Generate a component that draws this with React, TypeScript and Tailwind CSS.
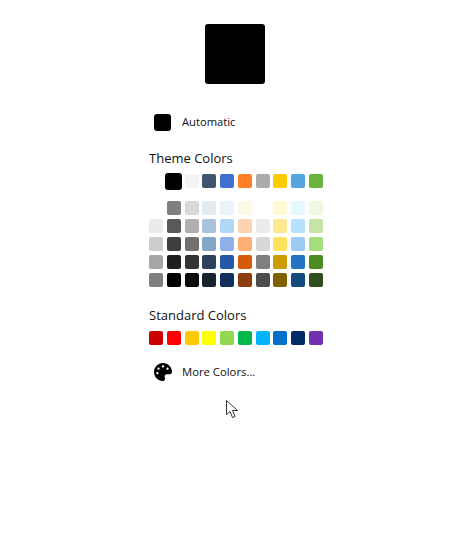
import { FaPalette } from "react-icons/fa";

const themeRow = ["#ffffff", "#000000", "#f4f4f4", "#3f5570", "#3f6fd0", "#ff7f27", "#ababab", "#ffcc00", "#55a5e0", "#6ab33c"];

const shades = [
  ["#ffffff", "#7f7f7f", "#d9d9d9", "#e3eaf2", "#e9f4fa", "#fbfbe3", "#ffffff", "#fff9d4", "#e6f8ff", "#f0fae2"],
  ["#ebebeb", "#595959", "#b0b0b0", "#a9c3dc", "#b0d8f4", "#fcd5b0", "#ebebeb", "#ffe88f", "#b8e0ff", "#c5e4a8"],
  ["#cccccc", "#3f3f3f", "#757070", "#86a6c8", "#8fb0ea", "#ffae75", "#d8d8d8", "#ffe35c", "#9accf4", "#a4dc80"],
  ["#a6a6a6", "#1f1f1f", "#333333", "#2b415e", "#2558a8", "#d65a0a", "#7f7f7f", "#cc9c00", "#2474c4", "#4c8a24"],
  ["#7f7f7f", "#000000", "#0d0d0d", "#16242f", "#12305e", "#8a3c0c", "#4d4d4d", "#7f6000", "#154a80", "#2c4f1c"],
];

const standard = ["#cc0000", "#ff0000", "#ffc800", "#ffff00", "#92d850", "#00b84c", "#00b4ff", "#0070cc", "#002b66", "#7030b0"];

function Swatch({ color, selected }: { color: string; selected?: boolean }) {
  return (
    <div className="flex h-[14px] w-[14px] items-center justify-center">
      <div
        className={selected ? "h-[17px] w-[17px] shrink-0 rounded-[3px]" : "h-[14px] w-[14px] shrink-0 rounded-[2px]"}
        style={{ backgroundColor: color }}
      />
    </div>
  );
}

function SwatchRow({ colors, selectedIndex }: { colors: string[]; selectedIndex?: number }) {
  return (
    <div className="flex w-[174px] justify-between">
      {colors.map((c, i) => (
        <Swatch key={i} color={c} selected={i === selectedIndex} />
      ))}
    </div>
  );
}

export default function App() {
  return (
    <div className="relative h-[541px] w-full bg-white font-['Open_Sans','Noto_Sans',sans-serif] text-[#111111]">
      <div className="mx-auto flex w-[176px] flex-col pt-6">
        <div className="ml-[56px] h-[60px] w-[60px] rounded-[3px] bg-black" />

        <div className="mt-[29px] flex h-[18px] items-center pl-[5px]">
          <div className="h-[17px] w-[17px] rounded-[3px] bg-black" />
          <span className="ml-[11px] text-[11.2px]">Automatic</span>
        </div>

        <div className="mt-[17px] h-[20px] text-[13px] leading-[20px]">Theme Colors</div>
        <div className="mt-[6px]">
          <SwatchRow colors={themeRow} selectedIndex={1} />
        </div>

        <div className="mt-[13px] flex flex-col gap-1">
          {shades.map((row, i) => (
            <SwatchRow key={i} colors={row} />
          ))}
        </div>

        <div className="mt-[18px] h-[20px] text-[13px] leading-[20px]">Standard Colors</div>
        <div className="mt-[6px]">
          <SwatchRow colors={standard} />
        </div>

        <div className="mt-[18px] flex h-[18px] items-center pl-[5px]">
          <FaPalette className="h-[18px] w-[18px] text-black" />
          <span className="ml-[10px] text-[11.3px]">More Colors...</span>
        </div>
      </div>

      {/* mouse pointer */}
      <svg className="absolute left-[225px] top-[399px]" width="15" height="21" viewBox="0 0 15 21">
        <path d="M1.5 1.5 L1.5 15.5 L5 12.5 L7.5 18.5 L10 17.5 L7.5 11.5 L12.5 11.5 Z" fill="#fff" stroke="#333" strokeWidth="1" strokeLinejoin="round" />
      </svg>
    </div>
  );
}
